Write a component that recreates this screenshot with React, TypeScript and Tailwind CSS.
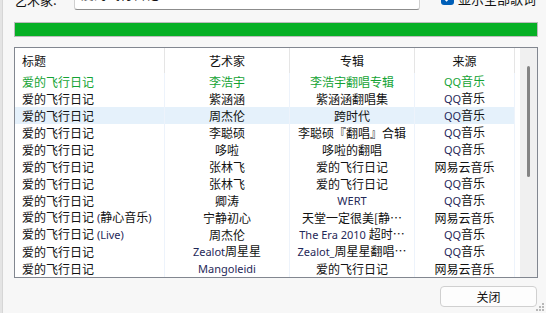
import React from "react";

type Seg = { t: string; latin?: boolean };
type Row = {
  title: Seg[];
  artist: Seg[];
  album: Seg[];
  source: Seg[];
  green?: boolean;
  selected?: boolean;
};

const cjk = (t: string): Seg => ({ t });
const lat = (t: string): Seg => ({ t, latin: true });
const qq = [lat("QQ"), cjk("音乐")];
const wy = [cjk("网易云音乐")];
const title = [cjk("爱的飞行日记")];

const rows: Row[] = [
  { title, artist: [cjk("李浩宇")], album: [cjk("李浩宇翻唱专辑")], source: qq, green: true },
  { title, artist: [cjk("紫涵涵")], album: [cjk("紫涵涵翻唱集")], source: qq },
  { title, artist: [cjk("周杰伦")], album: [cjk("跨时代")], source: qq, selected: true },
  { title, artist: [cjk("李聪硕")], album: [cjk("李聪硕『翻唱』合辑")], source: qq },
  { title, artist: [cjk("哆啦")], album: [cjk("哆啦的翻唱")], source: qq },
  { title, artist: [cjk("张林飞")], album: [cjk("爱的飞行日记")], source: wy },
  { title, artist: [cjk("张林飞")], album: [cjk("爱的飞行日记")], source: qq },
  { title, artist: [cjk("卿涛")], album: [lat("WERT")], source: qq },
  {
    title: [cjk("爱的飞行日记"), lat(" ("), cjk("静心音乐"), lat(")")],
    artist: [cjk("宁静初心")],
    album: [cjk("天堂一定很美[静…")],
    source: wy,
  },
  {
    title: [cjk("爱的飞行日记"), lat(" (Live)")],
    artist: [cjk("周杰伦")],
    album: [lat("The Era 2010 "), cjk("超时…")],
    source: qq,
  },
  {
    title,
    artist: [lat("Zealot"), cjk("周星星")],
    album: [lat("Zealot_"), cjk("周星星翻唱…")],
    source: qq,
  },
  { title, artist: [lat("Mangoleidi")], album: [cjk("爱的飞行日记")], source: wy },
];

function Text({ segs, green }: { segs: Seg[]; green?: boolean }) {
  return (
    <span className="whitespace-nowrap">
      {segs.map((s, i) =>
        s.latin ? (
          <span
            key={i}
            className={
              "font-['Segoe_UI','Noto_Sans',sans-serif] text-[11px] " +
              (green ? "text-[#14a334]" : "text-[#1f2858]")
            }
          >
            {s.t}
          </span>
        ) : (
          <span key={i}>{s.t}</span>
        )
      )}
    </span>
  );
}

export default function App() {
  return (
    <div className="w-[546px] h-[313px] bg-[#f7f7f7] overflow-hidden relative flex font-['Noto_Sans_CJK_SC',sans-serif] text-[12px] text-[#111]">
      {/* window behind */}
      <div className="w-[3px] h-full bg-[#e4e4e4] border-r border-[#d6d6d6]" />

      <div className="flex-1 flex flex-col pl-[11px] pr-[8px]">
        {/* top row, mostly cut off */}
        <div className="-mt-[18px] h-[28px] flex items-end">
          <div className="w-[60px] text-[13px] leading-[13px] pb-[4px]">艺术家:</div>
          <div className="w-[346px] h-[28px] bg-white border border-[#d0d0d0] border-b-[#8c8c8c] rounded-[3px] px-[6px] flex items-end pb-[9px] text-[13px] leading-[13px]">
            爱的飞行日记
          </div>
          <div className="ml-[21px] flex items-end gap-[4px] text-[13px] leading-[13px] pb-[5px]">
            <div className="w-[13px] h-[13px] rounded-[3px] bg-[#005fb8] flex items-center justify-center">
              <svg width="9" height="9" viewBox="0 0 9 9">
                <path d="M1.5 4.8 L3.6 6.8 L7.6 2.2" stroke="white" strokeWidth="1.3" fill="none" />
              </svg>
            </div>
            <span>显示全部歌词</span>
          </div>
        </div>

        {/* progress bar */}
        <div className="mt-[12px] h-[15px] border border-[#bcbcbc] bg-[#e6e6e6]">
          <div className="h-full w-full bg-[#06b025]" />
        </div>

        {/* list */}
        <div className="mt-[10px] h-[231px] border border-[#828790] bg-white flex">
          <div className="w-[500px] flex flex-col">
            <div className="h-[25px] flex items-center">
              <div className="w-[150px] h-full pl-[7px] flex items-center border-r border-[#e5e5e5]">标题</div>
              <div className="w-[125px] h-full flex items-center justify-center border-r border-[#e5e5e5]">艺术家</div>
              <div className="w-[125px] h-full flex items-center justify-center border-r border-[#e5e5e5]">专辑</div>
              <div className="w-[100px] h-full flex items-center justify-center border-r border-[#e5e5e5]">来源</div>
            </div>
            {rows.map((r, i) => (
              <div
                key={i}
                className={
                  "h-[17px] flex items-center " +
                  (r.selected ? "bg-[#e5f1fb] " : "") +
                  (r.green ? "text-[#14a334]" : "")
                }
              >
                <div className="w-[150px] h-full pl-[7px] flex items-center border-r border-[#edf3fb]">
                  <Text segs={r.title} green={r.green} />
                </div>
                <div className="w-[125px] h-full flex items-center justify-center border-r border-[#edf3fb]">
                  <Text segs={r.artist} green={r.green} />
                </div>
                <div className="w-[125px] h-full flex items-center justify-center border-r border-[#edf3fb]">
                  <Text segs={r.album} green={r.green} />
                </div>
                <div className="w-[100px] h-full flex items-center justify-center border-r border-[#edf3fb]">
                  <Text segs={r.source} green={r.green} />
                </div>
              </div>
            ))}
          </div>
          <div className="flex-1" />
          {/* scrollbar */}
          <div className="w-[17px] h-full bg-[#f0f0f0] flex justify-center pt-[18px]">
            <div className="w-[3px] h-[111px] rounded-full bg-[#858585]" />
          </div>
        </div>

        <div className="mt-[8px] flex justify-end pr-[1px]">
          <button className="w-[97px] h-[21px] rounded-[4px] border border-[#d0d0d0] bg-[#fdfdfd] flex items-center justify-center text-[12px]">
            关闭
          </button>
        </div>
      </div>

      {/* resize grip */}
      <svg className="absolute right-[1px] bottom-[1px]" width="10" height="10" viewBox="0 0 10 10">
        <rect x="7" y="1" width="2" height="2" fill="#b8b8b8" />
        <rect x="4" y="4" width="2" height="2" fill="#b8b8b8" />
        <rect x="7" y="4" width="2" height="2" fill="#b8b8b8" />
        <rect x="1" y="7" width="2" height="2" fill="#b8b8b8" />
        <rect x="4" y="7" width="2" height="2" fill="#b8b8b8" />
        <rect x="7" y="7" width="2" height="2" fill="#b8b8b8" />
      </svg>
    </div>
  );
}
